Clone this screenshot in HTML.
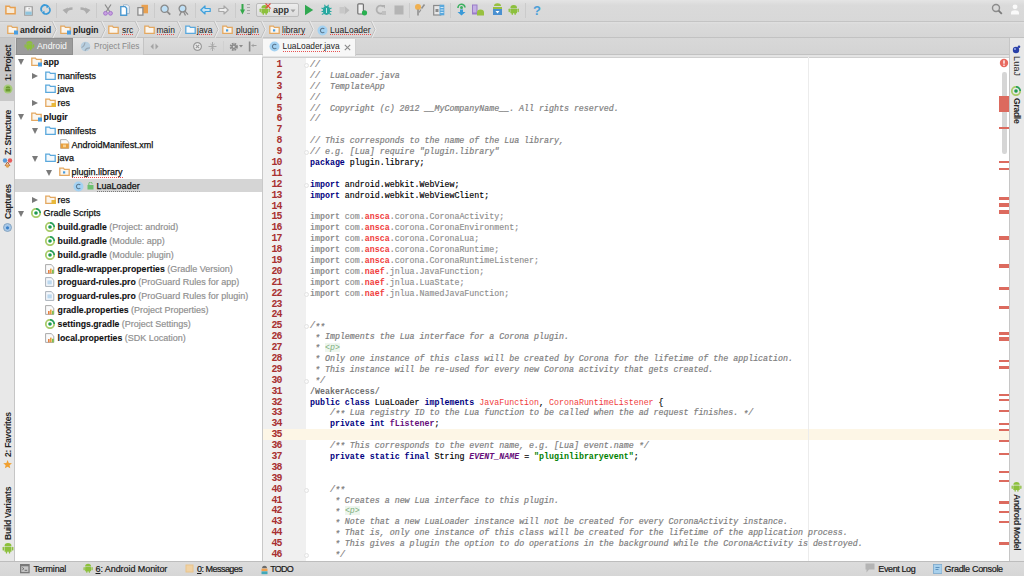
<!DOCTYPE html>
<html><head><meta charset="utf-8">
<style>
*{margin:0;padding:0;box-sizing:border-box}
html,body{width:1024px;height:576px;overflow:hidden;background:#e4e4e4;font-family:"Liberation Sans",sans-serif;font-size:9px;color:#1e1e1e}
.abs{position:absolute}
#toolbar{position:absolute;left:0;top:0;width:1024px;height:22px;background:linear-gradient(#e4e4e4,#dadada 25%,#d8d8d8);border-bottom:1px solid #c4c4c4}
#nav{position:absolute;left:0;top:22px;width:1024px;height:16px;background:linear-gradient(#e0e0e0,#dadada 15%,#d6d6d6);border-bottom:1px solid #c2c2c2}
.tsep{position:absolute;top:3px;width:1px;height:15px;background:#cbcbcb}
.ic{position:absolute}
.crumb{position:absolute;top:22px;height:17px;line-height:17px;font-size:8.5px;color:#222;white-space:nowrap}
.sq{background-image:linear-gradient(90deg,#e85050 50%,transparent 50%);background-size:2px 1px;background-repeat:repeat-x;background-position:0 11.8px}
.crumb b{font-weight:bold}
.squig{background-image:linear-gradient(90deg,#e05050 50%,transparent 50%);background-size:2px 1px;background-repeat:repeat-x;background-position:0 13px}
#lstripe{position:absolute;left:0;top:38px;width:15px;height:523px;background:#e8e8e8;border-right:1px solid #c6c6c6}
#rstripe{position:absolute;left:1009px;top:38px;width:15px;height:523px;background:#e8e8e8;border-left:1px solid #c6c6c6}
.vt{position:absolute;white-space:nowrap;font-size:9px;color:#222;transform-origin:0 0}
#proj{position:absolute;left:15px;top:38px;width:247px;height:523px;background:#fff}
#phead{position:absolute;left:0;top:0;width:247px;height:17px;background:linear-gradient(#dcdcdc,#d4d4d4);border-bottom:1px solid #c4c4c4}
.tree{position:absolute;left:0;height:14px;line-height:14px;white-space:nowrap;font-size:9px;color:#111;-webkit-text-stroke:0.25px #111}
.tree.b{font-weight:bold;font-size:8.7px;-webkit-text-stroke:0.1px #111}
.tree.und{background-image:linear-gradient(90deg,#7a7a7a 50%,transparent 50%);background-size:2px 1px;background-repeat:repeat-x;background-position:0 12px}
.tree.sqr{background-image:linear-gradient(90deg,#e85050 50%,transparent 50%);background-size:2px 1px;background-repeat:repeat-x;background-position:0 12px}
.tree .d{color:#8c8c8c;font-weight:normal;font-size:9px;-webkit-text-stroke:0.2px #9a9a9a}
.arr{position:absolute;width:0;height:0}
.adown{border-left:3px solid transparent;border-right:3px solid transparent;border-top:6px solid #7a7a7a}
.aright{border-top:3px solid transparent;border-bottom:3px solid transparent;border-left:6px solid #7a7a7a}
#etabs{position:absolute;left:262px;top:38px;width:747px;height:17px;background:linear-gradient(#d8d8d8,#d4d4d4);border-bottom:1px solid #c2c2c2}
#editor{position:absolute;left:262px;top:57px;width:747px;height:504px;background:#fff;overflow:hidden}
#gutter{position:absolute;left:0;top:0;width:44px;height:504px;background:#f0f0f0;border-left:1px solid #c8c8c8}
.num{position:absolute;left:0;width:19.4px;text-align:right;height:10.9px;line-height:10.9px;font-family:"Liberation Mono",monospace;font-size:9.9px;letter-spacing:-1px;font-weight:bold;color:#a83030;transform:translateY(-0.3px) scaleY(1.1)}
.ln{position:absolute;left:48px;height:10.9px;line-height:10.9px;white-space:pre;font-family:"Liberation Mono",monospace;font-size:8.30px;color:#000}
.ast{position:relative;top:1.3px}
.c{color:#808080;font-style:italic;-webkit-text-stroke:0.2px #808080}
.k{color:#000080;font-weight:bold}
.t{color:#000;-webkit-text-stroke:0.15px #000}
.g{color:#8e8e8e;-webkit-text-stroke:0.15px #8e8e8e}
.gk{color:#8e8e8e;font-weight:bold}
.r{color:#f03c3c;font-weight:bold}
.rn{color:#f03c3c}
.s{color:#008000;font-weight:bold}
.f{color:#660e7a;font-weight:bold}
.ci{color:#660e7a;font-weight:bold;font-style:italic}
.a{color:#707070;font-weight:bold}
.tag{color:#80b080;font-style:italic;background:#eef6ee}
.fold{position:absolute;left:41.5px;width:5px;height:5px;border:1px solid #e2e2e2;background:#fafafa;border-radius:2.5px}
.mk{position:absolute;left:737px;width:10px;background:#dc6a5e}
#status{position:absolute;left:0;top:561px;width:1024px;height:15px;background:linear-gradient(#dcdcdc,#d6d6d6);border-top:1px solid #bdbdbd}
.st{position:absolute;top:562px;height:15px;line-height:15px;font-size:9px;color:#1a1a1a;white-space:nowrap;-webkit-text-stroke:0.2px #1a1a1a}
.st u{text-decoration:underline;text-decoration-thickness:0.8px;text-underline-offset:1px}
</style></head><body>

<div id="toolbar">
  <div class="tsep" style="left:56px"></div>
  <div class="tsep" style="left:96px"></div>
  <div class="tsep" style="left:154px"></div>
  <div class="tsep" style="left:195px"></div>
  <div class="tsep" style="left:235px"></div>
  <div class="tsep" style="left:409px"></div>
  <div class="tsep" style="left:450px"></div>
  <div class="tsep" style="left:525px"></div>
<svg class="ic" style="left:5px;top:5px" width="11" height="10" viewBox="0 0 11 10"><path d="M0.9 1.3h3.5l1 1.2h4.7v6.3H0.9z" fill="#f6ead8" stroke="#e8a050" stroke-width="1.5"/></svg>
<svg class="ic" style="left:23.5px;top:5.5px" width="9" height="10" viewBox="0 0 9 10"><path d="M0.7 0.7h7.6v8.6H0.7z" fill="#e4e4e4" stroke="#9a9a9a" stroke-width="1.1"/><rect x="2.5" y="1.2" width="4" height="2.8" fill="#fafafa"/><rect x="4.6" y="1.8" width="1" height="1.6" fill="#9a9a9a"/><rect x="1.3" y="5.6" width="6.4" height="3.2" fill="#90c4dc"/></svg>
<svg class="ic" style="left:40px;top:4px" width="11" height="11" viewBox="0 0 11 11"><path d="M2 7.5A3.8 3.8 0 0 1 8 2.4" fill="none" stroke="#3a9ad8" stroke-width="1.8"/><path d="M9 3.5A3.8 3.8 0 0 1 3 8.6" fill="none" stroke="#3a9ad8" stroke-width="1.8"/><path d="M6.5 0.5l3 2.2-3 1.6z" fill="#3a9ad8"/><path d="M4.5 10.5l-3-2.2 3-1.6z" fill="#3a9ad8"/></svg>
<svg class="ic" style="left:62px;top:5px" width="11" height="10" viewBox="0 0 11 10"><path d="M3.5 7.5C5 4.5 7.5 3.5 10.5 3.5" fill="none" stroke="#acacac" stroke-width="2.4"/><path d="M0.5 5l5.5-2.5-1 6.5z" fill="#acacac"/></svg>
<svg class="ic" style="left:80px;top:5px" width="11" height="10" viewBox="0 0 11 10"><path d="M7.5 7.5C6 4.5 3.5 3.5 0.5 3.5" fill="none" stroke="#acacac" stroke-width="2.4"/><path d="M10.5 5L5 2.5l1 6.5z" fill="#acacac"/></svg>
<svg class="ic" style="left:103px;top:4px" width="10" height="12" viewBox="0 0 10 12"><path d="M2 0.5l5 7.5M8 0.5l-5 7.5" stroke="#8a8a8a" stroke-width="1.2"/><circle cx="2.5" cy="9.3" r="1.9" fill="#c8a0e0" stroke="#a070c8" stroke-width="0.9"/><circle cx="7.5" cy="9.3" r="1.9" fill="#c8a0e0" stroke="#a070c8" stroke-width="0.9"/></svg>
<svg class="ic" style="left:120px;top:4px" width="10" height="12" viewBox="0 0 10 12"><path d="M3.5 0.8h4l1.8 1.8v7h-5.8z" fill="#eef4fa" stroke="#9ab0c4" stroke-width="0.9"/><path d="M0.8 2.6h4.2l1.6 1.6v7H0.8z" fill="#ffffff" stroke="#4a98d0" stroke-width="1.4"/></svg>
<svg class="ic" style="left:137px;top:4px" width="12" height="12" viewBox="0 0 12 12"><rect x="4.5" y="0.8" width="6.5" height="8.5" fill="#e8a050"/><path d="M0.9 3.6h5v7.6h-5z" fill="#f2f2f2" stroke="#8c8c8c" stroke-width="1.3"/></svg>
<svg class="ic" style="left:160px;top:4px" width="11" height="12" viewBox="0 0 11 12"><circle cx="4.6" cy="4.8" r="3.6" fill="#bfe0f6" stroke="#8a8a8a" stroke-width="1.3"/><path d="M7.2 7.5l3 3.2" stroke="#8a8a8a" stroke-width="1.8"/></svg>
<svg class="ic" style="left:177px;top:4px" width="12" height="12" viewBox="0 0 12 12"><circle cx="5.5" cy="4.6" r="3.4" fill="#bfe0f6" stroke="#8a8a8a" stroke-width="1.3"/><path d="M2.5 11.5l2-4M8.5 11.5l-2-4M8 7.2l3 3.5" stroke="#8a8a8a" stroke-width="1.3"/></svg>
<svg class="ic" style="left:200px;top:5px" width="11" height="10" viewBox="0 0 11 10"><path d="M0.8 5L5 1v2.5h5.2v3H5V9z" fill="#c6e4f6" stroke="#3ea0dc" stroke-width="1.2" stroke-linejoin="round"/></svg>
<svg class="ic" style="left:218px;top:5px" width="11" height="10" viewBox="0 0 11 10"><path d="M10.2 5L6 1v2.5H0.8v3H6V9z" fill="#eeeeee" stroke="#a8a8a8" stroke-width="1.2" stroke-linejoin="round"/></svg>
<svg class="ic" style="left:240px;top:3px" width="11" height="13" viewBox="0 0 11 13"><path d="M2.5 1v6" stroke="#34a84a" stroke-width="2"/><path d="M0 6.5h5l-2.5 5z" fill="#34a84a"/><path d="M7 1.5h3M7 4.5h3M7 7.5h3M7 10.5h3" stroke="#a8a8a8" stroke-width="1.2"/></svg>
<div class="abs" style="left:256px;top:3px;width:43px;height:14px;border:1px solid #bcbcbc;border-radius:2px;background:linear-gradient(#ececec,#dcdcdc)"></div>
<svg class="ic" style="left:259px;top:4px" width="12" height="12" viewBox="0 0 12 12"><g transform="scale(0.95)" fill="#8cc03c"><path d="M2.5 4.2a3.5 3.2 0 0 1 7 0z"/><rect x="2.5" y="4.8" width="7" height="5" rx="0.6"/><rect x="0.6" y="4.8" width="1.4" height="3.8" rx="0.7"/><rect x="10" y="4.8" width="1.4" height="3.8" rx="0.7"/><rect x="3.8" y="9" width="1.4" height="2.6" rx="0.7"/><rect x="6.8" y="9" width="1.4" height="2.6" rx="0.7"/></g></svg>
<svg class="ic" style="left:265px;top:3px" width="6" height="6" viewBox="0 0 6 6"><path d="M0.5 0.5l5 5M5.5 0.5l-5 5" stroke="#e05040" stroke-width="1.1"/></svg>
<div class="abs" style="left:273px;top:3px;height:14px;line-height:15px;font-weight:bold;font-size:9px;color:#333">app</div>
<svg class="ic" style="left:290px;top:9px" width="6" height="4" viewBox="0 0 6 4"><path d="M0.5 0.5h5l-2.5 3z" fill="#a0a0a0"/></svg>
<svg class="ic" style="left:304px;top:4px" width="10" height="12" viewBox="0 0 10 12"><path d="M1 0.8l8.2 5.2L1 11.2z" fill="#30a850"/></svg>
<svg class="ic" style="left:321px;top:4px" width="11" height="12" viewBox="0 0 11 12"><ellipse cx="5.5" cy="6.5" rx="3.6" ry="4.4" fill="#28a8a0"/><path d="M0.5 4l2 1M10.5 4l-2 1M0.5 7.5h2M10.5 7.5h-2M0.8 10.5l2-1M10.2 10.5l-2-1M3.5 0.8l1 2M7.5 0.8l-1 2" stroke="#28a8a0" stroke-width="1.1"/><path d="M5.5 4v5" stroke="#bfeae6" stroke-width="1"/></svg>
<svg class="ic" style="left:339px;top:5px" width="11" height="11" viewBox="0 0 11 11"><path d="M0.5 2h4.5v6.5H0.5z" fill="#c8c8c8"/><path d="M5.5 1l5 4.2-5 4.2z" fill="#bcbcbc"/></svg>
<svg class="ic" style="left:357px;top:3px" width="11" height="13" viewBox="0 0 11 13"><rect x="0.8" y="0.8" width="5.6" height="10.2" rx="1" fill="#f0f0f0" stroke="#707070" stroke-width="1.2"/><circle cx="7.5" cy="9.8" r="2.6" fill="#28b050"/></svg>
<svg class="ic" style="left:375px;top:4px" width="12" height="12" viewBox="0 0 12 12"><path d="M8.2 2.6A4 4 0 1 0 8.8 8" fill="none" stroke="#b0b0b0" stroke-width="1.8"/><path d="M6.5 1h3.5v3.5z" fill="#b0b0b0"/><rect x="7" y="7" width="4" height="4" fill="#c0c0c0"/></svg>
<svg class="ic" style="left:394px;top:5px" width="10" height="10" viewBox="0 0 10 10"><rect x="0.5" y="0.5" width="9" height="9" fill="#b4b4b4"/></svg>
<svg class="ic" style="left:414px;top:3px" width="12" height="13" viewBox="0 0 12 13"><circle cx="4" cy="4" r="3" fill="#f0b050"/><path d="M4 6.5v6" stroke="#909090" stroke-width="1.6"/><path d="M10.5 1.5l-3 4" stroke="#909090" stroke-width="1.6"/><path d="M7 6.5l-2 3" stroke="#909090" stroke-width="1.2"/></svg>
<svg class="ic" style="left:433px;top:4px" width="12" height="12" viewBox="0 0 12 12"><rect x="0.7" y="1.5" width="7" height="9.5" fill="#e6e6e6" stroke="#8a8a8a" stroke-width="1.2"/><rect x="6.5" y="0.7" width="4.8" height="10.6" fill="#5aa8dc"/><path d="M7.5 3.5h3M7.5 6h3M7.5 8.5h3" stroke="#eaf4fb" stroke-width="0.8"/><rect x="2.5" y="5" width="3" height="3" fill="#8a8a8a"/></svg>
<svg class="ic" style="left:456px;top:3px" width="11" height="13" viewBox="0 0 11 13"><path d="M2 5A3.5 3.5 0 0 1 9 4.5" fill="none" stroke="#3cb060" stroke-width="1.6"/><circle cx="5.5" cy="4.6" r="1.5" fill="#3cb060"/><path d="M4 6.5h3v2.5h2.5L5.5 12.5 1.5 9H4z" fill="#3a9ad8"/></svg>
<svg class="ic" style="left:471px;top:4px" width="14" height="12" viewBox="0 0 14 12"><rect x="1" y="0.5" width="5.5" height="10" fill="#9a7cc8"/><rect x="2" y="1.5" width="3.5" height="7" fill="#c4b0e4"/><path d="M6 8.5a3.5 3 0 0 1 7 0v3H6z" fill="#98c040"/></svg>
<svg class="ic" style="left:492px;top:3px" width="11" height="13" viewBox="0 0 11 13"><path d="M2 3a3.5 2.8 0 0 1 7 0z" fill="#98c040"/><rect x="1" y="4" width="9" height="8" fill="#4a90d0"/><rect x="1" y="4" width="9" height="2" fill="#98c040"/><path d="M3.5 8h4l-2 2.5z" fill="#fff"/></svg>
<svg class="ic" style="left:508px;top:4px" width="12" height="12" viewBox="0 0 12 12"><g transform="scale(0.95)" fill="#8cc03c"><path d="M2.5 4.2a3.5 3.2 0 0 1 7 0z"/><rect x="2.5" y="4.8" width="7" height="5" rx="0.6"/><rect x="0.6" y="4.8" width="1.4" height="3.8" rx="0.7"/><rect x="10" y="4.8" width="1.4" height="3.8" rx="0.7"/><rect x="3.8" y="9" width="1.4" height="2.6" rx="0.7"/><rect x="6.8" y="9" width="1.4" height="2.6" rx="0.7"/></g></svg>
<div class="abs" style="left:533px;top:2px;height:17px;line-height:17px;font-weight:bold;font-size:13px;color:#4aa0d8">?</div>
<svg class="ic" style="left:991px;top:3px" width="12" height="12" viewBox="0 0 12 12"><circle cx="5" cy="5" r="3.5" fill="none" stroke="#8c8c8c" stroke-width="1.4"/><path d="M7.6 7.6l3.2 3.2" stroke="#7a7a7a" stroke-width="1.8"/></svg>
<svg class="ic" style="left:1010px;top:3px" width="10" height="12" viewBox="0 0 10 12"><circle cx="5" cy="3.8" r="2.4" fill="#fafafa"/><path d="M1 11.5v-1.8C1 8 3 7.3 5 7.3S9 8 9 9.7v1.8z" fill="#fafafa"/></svg>
</div>

<div id="nav"></div>
<svg class="ic" style="left:7px;top:25px" width="11" height="10" viewBox="0 0 11 10"><path d="M0.8 1.2h3.6l1 1.2h4.8v5.9H0.8z" fill="#fbf6ee" stroke="#e4a860" stroke-width="1.3"/><rect x="7" y="5.5" width="4" height="4" fill="#4a9ee0"/></svg>
<div class="crumb" style="left:20px;font-weight:bold">android</div>
<svg class="ic" style="left:50.5px;top:21px" width="7" height="17" viewBox="0 0 7 17"><path d="M1 0L5 8.5 1 17" fill="none" stroke="#bdbdbd" stroke-width="1"/><path d="M2 0L6 8.5 2 17" fill="none" stroke="#ececec" stroke-width="0.9"/></svg>
<svg class="ic" style="left:60px;top:25px" width="11" height="10" viewBox="0 0 11 10"><path d="M0.8 1.2h3.6l1 1.2h4.8v5.9H0.8z" fill="#fbf6ee" stroke="#e4a860" stroke-width="1.3"/><rect x="7" y="5.5" width="4" height="4" fill="#4a9ee0"/></svg>
<div class="crumb" style="left:73px;font-weight:bold">plugin</div>
<svg class="ic" style="left:99.5px;top:21px" width="7" height="17" viewBox="0 0 7 17"><path d="M1 0L5 8.5 1 17" fill="none" stroke="#bdbdbd" stroke-width="1"/><path d="M2 0L6 8.5 2 17" fill="none" stroke="#ececec" stroke-width="0.9"/></svg>
<svg class="ic" style="left:108px;top:25px" width="11" height="10" viewBox="0 0 11 10"><path d="M0.8 1.2h3.6l1 1.2h4.8v5.9H0.8z" fill="#fbf6ee" stroke="#e4a860" stroke-width="1.3"/></svg>
<div class="crumb sq" style="left:122px;font-weight:normal">src</div>
<svg class="ic" style="left:133.5px;top:21px" width="7" height="17" viewBox="0 0 7 17"><path d="M1 0L5 8.5 1 17" fill="none" stroke="#bdbdbd" stroke-width="1"/><path d="M2 0L6 8.5 2 17" fill="none" stroke="#ececec" stroke-width="0.9"/></svg>
<svg class="ic" style="left:143.5px;top:25px" width="11" height="10" viewBox="0 0 11 10"><path d="M0.8 1.2h3.6l1 1.2h4.8v5.9H0.8z" fill="#fbf6ee" stroke="#e4a860" stroke-width="1.3"/></svg>
<div class="crumb sq" style="left:156.5px;font-weight:normal">main</div>
<svg class="ic" style="left:175.5px;top:21px" width="7" height="17" viewBox="0 0 7 17"><path d="M1 0L5 8.5 1 17" fill="none" stroke="#bdbdbd" stroke-width="1"/><path d="M2 0L6 8.5 2 17" fill="none" stroke="#ececec" stroke-width="0.9"/></svg>
<svg class="ic" style="left:184.5px;top:25px" width="11" height="10" viewBox="0 0 11 10"><path d="M0.8 1.2h3.6l1 1.2h4.8v5.9H0.8z" fill="#f4f9fd" stroke="#5aa8dc" stroke-width="1.3"/></svg>
<div class="crumb sq" style="left:197px;font-weight:normal">java</div>
<svg class="ic" style="left:212.5px;top:21px" width="7" height="17" viewBox="0 0 7 17"><path d="M1 0L5 8.5 1 17" fill="none" stroke="#bdbdbd" stroke-width="1"/><path d="M2 0L6 8.5 2 17" fill="none" stroke="#ececec" stroke-width="0.9"/></svg>
<svg class="ic" style="left:222px;top:25px" width="11" height="10" viewBox="0 0 11 10"><path d="M0.8 1.2h3.6l1 1.2h4.8v5.9H0.8z" fill="#fbf6ee" stroke="#e4a860" stroke-width="1.3"/><rect x="4" y="4.3" width="2.2" height="2.2" fill="#4a9ee0"/></svg>
<div class="crumb sq" style="left:236px;font-weight:normal">plugin</div>
<svg class="ic" style="left:260.0px;top:21px" width="7" height="17" viewBox="0 0 7 17"><path d="M1 0L5 8.5 1 17" fill="none" stroke="#bdbdbd" stroke-width="1"/><path d="M2 0L6 8.5 2 17" fill="none" stroke="#ececec" stroke-width="0.9"/></svg>
<svg class="ic" style="left:269px;top:25px" width="11" height="10" viewBox="0 0 11 10"><path d="M0.8 1.2h3.6l1 1.2h4.8v5.9H0.8z" fill="#fbf6ee" stroke="#e4a860" stroke-width="1.3"/><rect x="4" y="4.3" width="2.2" height="2.2" fill="#4a9ee0"/></svg>
<div class="crumb sq" style="left:282px;font-weight:normal">library</div>
<svg class="ic" style="left:307.5px;top:21px" width="7" height="17" viewBox="0 0 7 17"><path d="M1 0L5 8.5 1 17" fill="none" stroke="#bdbdbd" stroke-width="1"/><path d="M2 0L6 8.5 2 17" fill="none" stroke="#ececec" stroke-width="0.9"/></svg>
<svg class="ic" style="left:317px;top:25px" width="11" height="11" viewBox="0 0 11 11"><circle cx="5.5" cy="5.5" r="5" fill="#a4d2f2"/><path d="M7.3 4A2.2 2.3 0 1 0 7.3 7" fill="none" stroke="#5a7890" stroke-width="1.1"/></svg>
<div class="crumb sq" style="left:330px;font-weight:normal">LuaLoader</div>
<svg class="ic" style="left:369.5px;top:21px" width="7" height="17" viewBox="0 0 7 17"><path d="M1 0L5 8.5 1 17" fill="none" stroke="#bdbdbd" stroke-width="1"/><path d="M2 0L6 8.5 2 17" fill="none" stroke="#ececec" stroke-width="0.9"/></svg>

<div id="lstripe"></div>
<div id="rstripe"></div>
<div class="abs" style="left:0;top:38px;width:14px;height:63px;background:#c8c8c8"></div>
<div class="vt" style="left:0.5px;top:81px;height:14px;line-height:14px;font-size:8.6px;letter-spacing:-0.3px;font-weight:bold;color:#262626;transform:rotate(-90deg)">1: Project</div>
<svg class="ic" style="left:2.5px;top:84px" width="10" height="10" viewBox="0 0 10 10"><circle cx="5" cy="5" r="4.5" fill="#a6cc78"/><path d="M2.6 4.2a2.4 2 0 0 1 4.8 0zM2.6 4.8h4.8v2.8H2.6z" fill="#6a9a30"/></svg>
<div class="vt" style="left:0.5px;top:154.5px;height:14px;line-height:14px;font-size:8.6px;letter-spacing:-0.3px;font-weight:bold;color:#262626;transform:rotate(-90deg)">Z: Structure</div>
<svg class="ic" style="left:2px;top:157px" width="11" height="11" viewBox="0 0 11 11"><path d="M5.5 5L3 9M5.5 5L8 9" stroke="#b06030" stroke-width="1"/><circle cx="3" cy="3.5" r="2.2" fill="#5a9ad8"/><circle cx="8" cy="3.5" r="2.2" fill="#e85a5a"/><circle cx="5.5" cy="9" r="1.8" fill="#e0a050"/></svg>
<div class="vt" style="left:0.5px;top:219px;height:14px;line-height:14px;font-size:8.6px;letter-spacing:-0.3px;font-weight:bold;color:#262626;transform:rotate(-90deg)">Captures</div>
<svg class="ic" style="left:3px;top:223px" width="9" height="9" viewBox="0 0 9 9"><circle cx="4.5" cy="4.5" r="4" fill="#a8c8e8" stroke="#7a9ab8" stroke-width="0.8"/><circle cx="4.5" cy="4.8" r="1.6" fill="#3a80c8"/></svg>
<div class="vt" style="left:0.5px;top:456.5px;height:14px;line-height:14px;font-size:8.6px;letter-spacing:-0.3px;font-weight:bold;color:#262626;transform:rotate(-90deg)">2: Favorites</div>
<svg class="ic" style="left:2.7px;top:459.9px" width="9.2" height="9.2" viewBox="0 0 9.2 9.2"><polygon points="4.60,0.00 5.82,2.93 8.97,3.18 6.57,5.24 7.30,8.32 4.60,6.67 1.90,8.32 2.63,5.24 0.23,3.18 3.38,2.93" fill="#f0a030"/></svg>
<div class="vt" style="left:0.5px;top:539.5px;height:14px;line-height:14px;font-size:8.6px;letter-spacing:-0.3px;font-weight:bold;color:#262626;transform:rotate(-90deg)">Build Variants</div>
<svg class="ic" style="left:1.5px;top:542px" width="12" height="12" viewBox="0 0 12 12"><g transform="scale(1.0)" fill="#8cc03c"><path d="M2.5 4.2a3.5 3.2 0 0 1 7 0z"/><rect x="2.5" y="4.8" width="7" height="5" rx="0.6"/><rect x="0.6" y="4.8" width="1.4" height="3.8" rx="0.7"/><rect x="10" y="4.8" width="1.4" height="3.8" rx="0.7"/><rect x="3.8" y="9" width="1.4" height="2.6" rx="0.7"/><rect x="6.8" y="9" width="1.4" height="2.6" rx="0.7"/></g></svg>
<svg class="ic" style="left:1012px;top:44.5px" width="9" height="9" viewBox="0 0 9 9"><circle cx="4" cy="5" r="3.2" fill="#2a40a8"/><circle cx="7" cy="1.8" r="1.3" fill="#2a40a8"/><circle cx="3" cy="4" r="0.9" fill="#a8b8f0"/></svg>
<div class="vt" style="left:1024.3px;top:56px;height:14px;line-height:14px;font-size:9px;letter-spacing:0.2px;font-weight:normal;color:#222;transform:rotate(90deg)">LuaJ</div>
<svg class="ic" style="left:1011px;top:85.5px" width="10" height="10" viewBox="0 0 10 10"><path d="M5 0.8a4.2 4.2 0 0 1 4.2 4.2" fill="none" stroke="#2ca05a" stroke-width="1.8"/><path d="M9.2 5a4.2 4.2 0 1 1 -4.2 -4.2" fill="none" stroke="#a8cc6a" stroke-width="1.8"/><circle cx="5" cy="5" r="1.8" fill="#1e9a50"/></svg>
<div class="vt" style="left:1024.3px;top:98px;height:14px;line-height:14px;font-size:8.6px;letter-spacing:-0.3px;font-weight:bold;color:#262626;transform:rotate(90deg)">Gradle</div>
<svg class="ic" style="left:1010.5px;top:481px" width="12" height="12" viewBox="0 0 12 12"><g transform="scale(0.92)" fill="#8cc03c"><path d="M2.5 4.2a3.5 3.2 0 0 1 7 0z"/><rect x="2.5" y="4.8" width="7" height="5" rx="0.6"/><rect x="0.6" y="4.8" width="1.4" height="3.8" rx="0.7"/><rect x="10" y="4.8" width="1.4" height="3.8" rx="0.7"/><rect x="3.8" y="9" width="1.4" height="2.6" rx="0.7"/><rect x="6.8" y="9" width="1.4" height="2.6" rx="0.7"/></g></svg>
<div class="vt" style="left:1024.3px;top:494px;height:14px;line-height:14px;font-size:8.6px;letter-spacing:-0.3px;font-weight:bold;color:#262626;transform:rotate(90deg)">Android Model</div>

<div id="proj">
  <div id="phead"></div>
  <div class="abs" style="left:0;top:140.6px;width:247px;height:13.6px;background:#d5d5d5"></div>
  <div class="arr adown" style="left:3px;top:21.2px"></div>
<svg class="ic" style="left:16px;top:19px" width="11" height="10" viewBox="0 0 11 10"><path d="M0.8 1.2h3.6l1 1.2h4.8v5.9H0.8z" fill="#fbf6ee" stroke="#e4a860" stroke-width="1.3"/><rect x="7" y="5.5" width="4" height="4" fill="#4a9ee0"/></svg>
<div class="tree b" style="left:28.6px;top:16.8px">app</div>
<div class="arr aright" style="left:17px;top:34.5px"></div>
<svg class="ic" style="left:30px;top:33px" width="11" height="10" viewBox="0 0 11 10"><path d="M0.8 1.2h3.6l1 1.2h4.8v5.9H0.8z" fill="#f4f9fd" stroke="#5aa8dc" stroke-width="1.3"/></svg>
<div class="tree" style="left:42.6px;top:30.5px">manifests</div>
<svg class="ic" style="left:30px;top:46px" width="11" height="10" viewBox="0 0 11 10"><path d="M0.8 1.2h3.6l1 1.2h4.8v5.9H0.8z" fill="#f4f9fd" stroke="#5aa8dc" stroke-width="1.3"/></svg>
<div class="tree" style="left:42.6px;top:44.3px">java</div>
<div class="arr aright" style="left:17px;top:62.1px"></div>
<svg class="ic" style="left:30px;top:60px" width="11" height="10" viewBox="0 0 11 10"><path d="M0.8 1.2h3.6l1 1.2h4.8v5.9H0.8z" fill="#fbf6ee" stroke="#e4a860" stroke-width="1.3"/><rect x="6.5" y="5" width="4.5" height="4" fill="#e8b83a"/></svg>
<div class="tree" style="left:42.6px;top:58.1px">res</div>
<div class="arr adown" style="left:3px;top:76.4px"></div>
<svg class="ic" style="left:16px;top:74px" width="11" height="10" viewBox="0 0 11 10"><path d="M0.8 1.2h3.6l1 1.2h4.8v5.9H0.8z" fill="#fbf6ee" stroke="#e4a860" stroke-width="1.3"/><rect x="7" y="5.5" width="4" height="4" fill="#4a9ee0"/></svg>
<div class="tree b" style="left:28.6px;top:71.9px">plugir</div>
<div class="arr adown" style="left:17px;top:90.2px"></div>
<svg class="ic" style="left:30px;top:88px" width="11" height="10" viewBox="0 0 11 10"><path d="M0.8 1.2h3.6l1 1.2h4.8v5.9H0.8z" fill="#f4f9fd" stroke="#5aa8dc" stroke-width="1.3"/></svg>
<div class="tree" style="left:42.6px;top:85.7px">manifests</div>
<svg class="ic" style="left:45px;top:101px" width="10" height="10" viewBox="0 0 10 10"><path d="M0.6 0.6h5.6l2.6 2.6v6.2H0.6z" fill="#fafafa" stroke="#a8a8a8" stroke-width="0.9"/><rect x="0.6" y="4.5" width="8.2" height="5" fill="#e8a040"/><rect x="3" y="5.6" width="3" height="2.6" fill="#f6d090"/></svg>
<div class="tree" style="left:56.6px;top:99.5px">AndroidManifest.xml</div>
<div class="arr adown" style="left:17px;top:117.8px"></div>
<svg class="ic" style="left:30px;top:115px" width="11" height="10" viewBox="0 0 11 10"><path d="M0.8 1.2h3.6l1 1.2h4.8v5.9H0.8z" fill="#f4f9fd" stroke="#5aa8dc" stroke-width="1.3"/></svg>
<div class="tree" style="left:42.6px;top:113.3px">java</div>
<div class="arr adown" style="left:31px;top:131.6px"></div>
<svg class="ic" style="left:44px;top:129px" width="11" height="10" viewBox="0 0 11 10"><path d="M0.8 1.2h3.6l1 1.2h4.8v5.9H0.8z" fill="#fbf6ee" stroke="#e4a860" stroke-width="1.3"/><rect x="4" y="4.3" width="2.2" height="2.2" fill="#4a9ee0"/></svg>
<div class="tree sqr" style="left:56.6px;top:127.1px">plugin.library</div>
<svg class="ic" style="left:57.5px;top:142.5px" width="11" height="11" viewBox="0 0 11 11"><circle cx="5.5" cy="5.5" r="5" fill="#a4d2f2"/><path d="M7.3 4A2.2 2.3 0 1 0 7.3 7" fill="none" stroke="#5a7890" stroke-width="1.1"/></svg>
<svg class="ic" style="left:72px;top:144px" width="7" height="8" viewBox="0 0 7 8"><rect x="0.5" y="3" width="6" height="4.5" fill="#6cc070"/><path d="M1.8 3.2V1.8a1.7 1.7 0 0 1 3.4 0" fill="none" stroke="#6cc070" stroke-width="1"/></svg>
<div class="tree und" style="left:81.6px;top:140.9px">LuaLoader</div>
<div class="arr aright" style="left:17px;top:158.6px"></div>
<svg class="ic" style="left:30px;top:157px" width="11" height="10" viewBox="0 0 11 10"><path d="M0.8 1.2h3.6l1 1.2h4.8v5.9H0.8z" fill="#fbf6ee" stroke="#e4a860" stroke-width="1.3"/><rect x="6.5" y="5" width="4.5" height="4" fill="#e8b83a"/></svg>
<div class="tree" style="left:42.6px;top:154.6px">res</div>
<div class="arr adown" style="left:3px;top:172.9px"></div>
<svg class="ic" style="left:16px;top:170px" width="10" height="10" viewBox="0 0 10 10"><path d="M5 0.8a4.2 4.2 0 0 1 4.2 4.2" fill="none" stroke="#2ca05a" stroke-width="1.8"/><path d="M9.2 5a4.2 4.2 0 1 1 -4.2 -4.2" fill="none" stroke="#a8cc6a" stroke-width="1.8"/><circle cx="5" cy="5" r="1.8" fill="#1e9a50"/></svg>
<div class="tree" style="left:28.6px;top:168.4px">Gradle Scripts</div>
<svg class="ic" style="left:30px;top:184px" width="10" height="10" viewBox="0 0 10 10"><path d="M5 0.8a4.2 4.2 0 0 1 4.2 4.2" fill="none" stroke="#2ca05a" stroke-width="1.8"/><path d="M9.2 5a4.2 4.2 0 1 1 -4.2 -4.2" fill="none" stroke="#a8cc6a" stroke-width="1.8"/><circle cx="5" cy="5" r="1.8" fill="#1e9a50"/></svg>
<div class="tree b" style="left:42.6px;top:182.2px">build.gradle <span class="d">(Project: android)</span></div>
<svg class="ic" style="left:30px;top:198px" width="10" height="10" viewBox="0 0 10 10"><path d="M5 0.8a4.2 4.2 0 0 1 4.2 4.2" fill="none" stroke="#2ca05a" stroke-width="1.8"/><path d="M9.2 5a4.2 4.2 0 1 1 -4.2 -4.2" fill="none" stroke="#a8cc6a" stroke-width="1.8"/><circle cx="5" cy="5" r="1.8" fill="#1e9a50"/></svg>
<div class="tree b" style="left:42.6px;top:196.0px">build.gradle <span class="d">(Module: app)</span></div>
<svg class="ic" style="left:30px;top:212px" width="10" height="10" viewBox="0 0 10 10"><path d="M5 0.8a4.2 4.2 0 0 1 4.2 4.2" fill="none" stroke="#2ca05a" stroke-width="1.8"/><path d="M9.2 5a4.2 4.2 0 1 1 -4.2 -4.2" fill="none" stroke="#a8cc6a" stroke-width="1.8"/><circle cx="5" cy="5" r="1.8" fill="#1e9a50"/></svg>
<div class="tree b" style="left:42.6px;top:209.8px">build.gradle <span class="d">(Module: plugin)</span></div>
<svg class="ic" style="left:30px;top:226px" width="10" height="10" viewBox="0 0 10 10"><path d="M0.6 0.6h5.6l2.6 2.6v6.2H0.6z" fill="#fafafa" stroke="#a0a0a0" stroke-width="0.9"/><rect x="3" y="6" width="1.6" height="3.4" fill="#e88040"/><rect x="5" y="4.6" width="1.6" height="4.8" fill="#e8a040"/><rect x="7" y="5.8" width="1.8" height="3.6" fill="#80c050"/></svg>
<div class="tree b" style="left:42.6px;top:223.6px">gradle-wrapper.properties <span class="d">(Gradle Version)</span></div>
<svg class="ic" style="left:30px;top:239px" width="10" height="10" viewBox="0 0 10 10"><path d="M0.6 0.6h5.6l2.6 2.6v6.2H0.6z" fill="#f4f8fc" stroke="#a0a8b0" stroke-width="0.9"/><rect x="2.4" y="3.4" width="4.4" height="4" fill="#bcd8ee"/></svg>
<div class="tree b" style="left:42.6px;top:237.4px">proguard-rules.pro <span class="d">(ProGuard Rules for app)</span></div>
<svg class="ic" style="left:30px;top:253px" width="10" height="10" viewBox="0 0 10 10"><path d="M0.6 0.6h5.6l2.6 2.6v6.2H0.6z" fill="#f4f8fc" stroke="#a0a8b0" stroke-width="0.9"/><rect x="2.4" y="3.4" width="4.4" height="4" fill="#bcd8ee"/></svg>
<div class="tree b" style="left:42.6px;top:251.2px">proguard-rules.pro <span class="d">(ProGuard Rules for plugin)</span></div>
<svg class="ic" style="left:30px;top:267px" width="10" height="10" viewBox="0 0 10 10"><path d="M0.6 0.6h5.6l2.6 2.6v6.2H0.6z" fill="#fafafa" stroke="#a0a0a0" stroke-width="0.9"/><rect x="3" y="6" width="1.6" height="3.4" fill="#e88040"/><rect x="5" y="4.6" width="1.6" height="4.8" fill="#e8a040"/><rect x="7" y="5.8" width="1.8" height="3.6" fill="#80c050"/></svg>
<div class="tree b" style="left:42.6px;top:265.0px">gradle.properties <span class="d">(Project Properties)</span></div>
<svg class="ic" style="left:30px;top:281px" width="10" height="10" viewBox="0 0 10 10"><path d="M5 0.8a4.2 4.2 0 0 1 4.2 4.2" fill="none" stroke="#2ca05a" stroke-width="1.8"/><path d="M9.2 5a4.2 4.2 0 1 1 -4.2 -4.2" fill="none" stroke="#a8cc6a" stroke-width="1.8"/><circle cx="5" cy="5" r="1.8" fill="#1e9a50"/></svg>
<div class="tree b" style="left:42.6px;top:278.8px">settings.gradle <span class="d">(Project Settings)</span></div>
<svg class="ic" style="left:30px;top:295px" width="10" height="10" viewBox="0 0 10 10"><path d="M0.6 0.6h5.6l2.6 2.6v6.2H0.6z" fill="#fafafa" stroke="#a0a0a0" stroke-width="0.9"/><rect x="3" y="6" width="1.6" height="3.4" fill="#e88040"/><rect x="5" y="4.6" width="1.6" height="4.8" fill="#e8a040"/><rect x="7" y="5.8" width="1.8" height="3.6" fill="#80c050"/></svg>
<div class="tree b" style="left:42.6px;top:292.5px">local.properties <span class="d">(SDK Location)</span></div>
</div>

<div id="etabs"></div>
<div class="abs" style="left:262.5px;top:38.5px;width:93px;height:17px;background:#f7f7f7;border-right:1px solid #cfcfcf"></div>
<svg class="ic" style="left:268.5px;top:41px" width="11" height="11" viewBox="0 0 11 11"><circle cx="5.5" cy="5.5" r="5" fill="#a4d2f2"/><path d="M7.3 4A2.2 2.3 0 1 0 7.3 7" fill="none" stroke="#5a7890" stroke-width="1.1"/></svg>
<div class="abs sq" style="background-position:0 12.5px;left:282.5px;top:38px;height:17px;line-height:17px;font-size:8.35px;color:#222;white-space:nowrap">LuaLoader.java</div>
<svg class="ic" style="left:344px;top:43.5px" width="7" height="7" viewBox="0 0 7 7"><path d="M0.8 0.8l5.4 5.4M6.2 0.8L0.8 6.2" stroke="#8a8a8a" stroke-width="1.1"/></svg>

<div id="editor">
  <div id="gutter"></div>
  <div class="abs" style="left:0;top:0;width:747px;height:1px;background:#cfcfcf"></div>
  <div class="abs" style="left:1px;top:371.6px;width:746px;height:11.1px;background:#fdf6e6"></div>
  <div class="abs" style="left:546px;top:0;width:1px;height:504px;background:#ececec"></div>
  <div id="nums" class="abs" style="left:0;top:-57px"><div class="num" style="top:60.00px">1</div>
<div class="num" style="top:70.89px">2</div>
<div class="num" style="top:81.78px">3</div>
<div class="num" style="top:92.67px">4</div>
<div class="num" style="top:103.56px">5</div>
<div class="num" style="top:114.44px">6</div>
<div class="num" style="top:125.33px">7</div>
<div class="num" style="top:136.22px">8</div>
<div class="num" style="top:147.11px">9</div>
<div class="num" style="top:158.00px">10</div>
<div class="num" style="top:168.89px">11</div>
<div class="num" style="top:179.78px">12</div>
<div class="num" style="top:190.67px">13</div>
<div class="num" style="top:201.56px">14</div>
<div class="num" style="top:212.45px">15</div>
<div class="num" style="top:223.33px">16</div>
<div class="num" style="top:234.22px">17</div>
<div class="num" style="top:245.11px">18</div>
<div class="num" style="top:256.00px">19</div>
<div class="num" style="top:266.89px">20</div>
<div class="num" style="top:277.78px">21</div>
<div class="num" style="top:288.67px">22</div>
<div class="num" style="top:299.56px">23</div>
<div class="num" style="top:310.45px">24</div>
<div class="num" style="top:321.34px">25</div>
<div class="num" style="top:332.22px">26</div>
<div class="num" style="top:343.11px">27</div>
<div class="num" style="top:354.00px">28</div>
<div class="num" style="top:364.89px">29</div>
<div class="num" style="top:375.78px">30</div>
<div class="num" style="top:386.67px">31</div>
<div class="num" style="top:397.56px">32</div>
<div class="num" style="top:408.45px">33</div>
<div class="num" style="top:419.34px">34</div>
<div class="num" style="top:430.23px">35</div>
<div class="num" style="top:441.11px">36</div>
<div class="num" style="top:452.00px">37</div>
<div class="num" style="top:462.89px">38</div>
<div class="num" style="top:473.78px">39</div>
<div class="num" style="top:484.67px">40</div>
<div class="num" style="top:495.56px">41</div>
<div class="num" style="top:506.45px">42</div>
<div class="num" style="top:517.34px">43</div>
<div class="num" style="top:528.23px">44</div>
<div class="num" style="top:539.12px">45</div>
<div class="num" style="top:550.00px">46</div></div>
  <div class="abs" style="left:0;top:-57px"><div class="fold" style="top:63.00px"></div><div class="fold" style="top:150.11px"></div><div class="fold" style="top:182.78px"></div><div class="fold" style="top:291.67px"></div><div class="fold" style="top:324.34px"></div><div class="fold" style="top:378.78px"></div><div class="fold" style="top:487.67px"></div><div class="fold" style="top:553.00px"></div></div>
  <div class="abs" style="left:0;top:-57px"><div class="ln" style="top:60.00px"><span class="c">//</span></div>
<div class="ln" style="top:70.89px"><span class="c">//  LuaLoader.java</span></div>
<div class="ln" style="top:81.78px"><span class="c">//  TemplateApp</span></div>
<div class="ln" style="top:92.67px"><span class="c">//</span></div>
<div class="ln" style="top:103.56px"><span class="c">//  Copyright (c) 2012 __MyCompanyName__. All rights reserved.</span></div>
<div class="ln" style="top:114.44px"><span class="c">//</span></div>
<div class="ln" style="top:125.33px"></div>
<div class="ln" style="top:136.22px"><span class="c">// This corresponds to the name of the Lua library,</span></div>
<div class="ln" style="top:147.11px"><span class="c">// e.g. [Lua] require "plugin.library"</span></div>
<div class="ln" style="top:158.00px"><span class="k">package</span><span class="t"> plugin.library;</span></div>
<div class="ln" style="top:168.89px"></div>
<div class="ln" style="top:179.78px"><span class="k">import</span><span class="t"> android.webkit.WebView;</span></div>
<div class="ln" style="top:190.67px"><span class="k">import</span><span class="t"> android.webkit.WebViewClient;</span></div>
<div class="ln" style="top:201.56px"></div>
<div class="ln" style="top:212.45px"><span class="gk">import</span><span class="g"> com.</span><span class="r">ansca</span><span class="g">.corona.CoronaActivity;</span></div>
<div class="ln" style="top:223.33px"><span class="gk">import</span><span class="g"> com.</span><span class="r">ansca</span><span class="g">.corona.CoronaEnvironment;</span></div>
<div class="ln" style="top:234.22px"><span class="gk">import</span><span class="g"> com.</span><span class="r">ansca</span><span class="g">.corona.CoronaLua;</span></div>
<div class="ln" style="top:245.11px"><span class="gk">import</span><span class="g"> com.</span><span class="r">ansca</span><span class="g">.corona.CoronaRuntime;</span></div>
<div class="ln" style="top:256.00px"><span class="gk">import</span><span class="g"> com.</span><span class="r">ansca</span><span class="g">.corona.CoronaRuntimeListener;</span></div>
<div class="ln" style="top:266.89px"><span class="gk">import</span><span class="g"> com.</span><span class="r">naef</span><span class="g">.jnlua.JavaFunction;</span></div>
<div class="ln" style="top:277.78px"><span class="gk">import</span><span class="g"> com.</span><span class="r">naef</span><span class="g">.jnlua.LuaState;</span></div>
<div class="ln" style="top:288.67px"><span class="gk">import</span><span class="g"> com.</span><span class="r">naef</span><span class="g">.jnlua.NamedJavaFunction;</span></div>
<div class="ln" style="top:299.56px"></div>
<div class="ln" style="top:310.45px"></div>
<div class="ln" style="top:321.34px"><span class="c">/<span class="ast">*</span><span class="ast">*</span></span></div>
<div class="ln" style="top:332.22px"><span class="c"> <span class="ast">*</span> Implements the Lua interface for a Corona plugin.</span></div>
<div class="ln" style="top:343.11px"><span class="c"> <span class="ast">*</span> </span><span class="tag">&lt;p&gt;</span></div>
<div class="ln" style="top:354.00px"><span class="c"> <span class="ast">*</span> Only one instance of this class will be created by Corona for the lifetime of the application.</span></div>
<div class="ln" style="top:364.89px"><span class="c"> <span class="ast">*</span> This instance will be re-used for every new Corona activity that gets created.</span></div>
<div class="ln" style="top:375.78px"><span class="c"> <span class="ast">*</span>/</span></div>
<div class="ln" style="top:386.67px"><span class="a">/WeakerAccess/</span></div>
<div class="ln" style="top:397.56px"><span class="k">public class</span><span class="t"> LuaLoader </span><span class="k">implements</span><span class="t"> </span><span class="rn">JavaFunction</span><span class="t">, </span><span class="rn">CoronaRuntimeListener</span><span class="t"> {</span></div>
<div class="ln" style="top:408.45px"><span class="t">    </span><span class="c">/<span class="ast">*</span><span class="ast">*</span> Lua registry ID to the Lua function to be called when the ad request finishes. <span class="ast">*</span>/</span></div>
<div class="ln" style="top:419.34px"><span class="t">    </span><span class="k">private int</span><span class="t"> </span><span class="f">fListener</span><span class="t">;</span></div>
<div class="ln" style="top:430.23px"></div>
<div class="ln" style="top:441.11px"><span class="t">    </span><span class="c">/<span class="ast">*</span><span class="ast">*</span> This corresponds to the event name, e.g. [Lua] event.name <span class="ast">*</span>/</span></div>
<div class="ln" style="top:452.00px"><span class="t">    </span><span class="k">private static final</span><span class="t"> String </span><span class="ci">EVENT_NAME</span><span class="t"> = </span><span class="s">"pluginlibraryevent"</span><span class="t">;</span></div>
<div class="ln" style="top:462.89px"></div>
<div class="ln" style="top:473.78px"></div>
<div class="ln" style="top:484.67px"><span class="t">    </span><span class="c">/<span class="ast">*</span><span class="ast">*</span></span></div>
<div class="ln" style="top:495.56px"><span class="t">    </span><span class="c"> <span class="ast">*</span> Creates a new Lua interface to this plugin.</span></div>
<div class="ln" style="top:506.45px"><span class="t">    </span><span class="c"> <span class="ast">*</span> </span><span class="tag">&lt;p&gt;</span></div>
<div class="ln" style="top:517.34px"><span class="t">    </span><span class="c"> <span class="ast">*</span> Note that a new LuaLoader instance will not be created for every CoronaActivity instance.</span></div>
<div class="ln" style="top:528.23px"><span class="t">    </span><span class="c"> <span class="ast">*</span> That is, only one instance of this class will be created for the lifetime of the application process.</span></div>
<div class="ln" style="top:539.12px"><span class="t">    </span><span class="c"> <span class="ast">*</span> This gives a plugin the option to do operations in the background while the CoronaActivity is destroyed.</span></div>
<div class="ln" style="top:550.00px"><span class="t">    </span><span class="c"> <span class="ast">*</span>/</span></div></div>
  <div class="abs" style="left:740.4px;top:15px;width:4.4px;height:82px;background:#d6d6d6;border-radius:2.2px"></div>
  <div class="abs" style="left:0;top:-57px"><div class="mk" style="top:95.9px;height:15.8px"></div><div class="mk" style="top:127.2px;height:2.2px"></div><div class="mk" style="top:160.8px;height:2.4px"></div><div class="mk" style="top:168.2px;height:2.2px"></div><div class="mk" style="top:196.7px;height:3.8px"></div><div class="mk" style="top:203px;height:4.4px"></div><div class="mk" style="top:209.9px;height:3.8px"></div><div class="mk" style="top:235.8px;height:4px"></div><div class="mk" style="top:264.2px;height:3.4px"></div><div class="mk" style="top:287px;height:3.2px"></div><div class="mk" style="top:306.1px;height:3px"></div><div class="mk" style="top:331.9px;height:2.9px"></div><div class="mk" style="top:337.2px;height:3.8px"></div><div class="mk" style="top:359.6px;height:2px"></div><div class="mk" style="top:365.6px;height:3.8px"></div><div class="mk" style="top:393.6px;height:2px"></div><div class="mk" style="top:399.3px;height:2px"></div><div class="mk" style="top:410.3px;height:2px"></div><div class="mk" style="top:423.2px;height:2px"></div><div class="mk" style="top:429.1px;height:2px"></div><div class="mk" style="top:440.3px;height:2px"></div><div class="mk" style="top:453.1px;height:2.2px"></div><div class="mk" style="top:470.5px;height:2px"></div><div class="mk" style="top:480.1px;height:2.2px"></div><div class="mk" style="top:500.7px;height:3.7px"></div><div class="mk" style="top:511.4px;height:1.9px"></div><div class="mk" style="top:520.8px;height:2px"></div><div class="mk" style="top:541.8px;height:3.6px"></div></div>
  <svg class="abs" style="left:737px;top:1px" width="10" height="10" viewBox="0 0 10 10"><circle cx="5" cy="5" r="4.2" fill="#e86a60"/><rect x="4.3" y="2.3" width="1.4" height="3.4" fill="#fff"/><rect x="4.3" y="6.6" width="1.4" height="1.3" fill="#fff"/></svg>
</div>

<div id="status"></div>
<svg class="ic" style="left:20.3px;top:564.3px" width="10" height="9.5" viewBox="0 0 10 9.5"><rect x="0" y="0" width="9.7" height="9.3" fill="#787878"/><rect x="1.3" y="2.3" width="7.1" height="5.6" fill="#c8c8c8"/><path d="M2.3 3.5l1.6 1.2-1.6 1.2M4.6 6.3h2.6" stroke="#555" stroke-width="0.8" fill="none"/></svg>
<svg class="ic" style="left:82.5px;top:562.5px" width="11" height="11" viewBox="0 0 11 11"><g transform="scale(0.85)" fill="#8cc03c"><path d="M2.5 4.2a3.5 3.2 0 0 1 7 0z"/><rect x="2.5" y="4.8" width="7" height="5" rx="0.6"/><rect x="0.6" y="4.8" width="1.4" height="3.8" rx="0.7"/><rect x="10" y="4.8" width="1.4" height="3.8" rx="0.7"/><rect x="3.8" y="9" width="1.4" height="2.6" rx="0.7"/><rect x="6.8" y="9" width="1.4" height="2.6" rx="0.7"/></g></svg>
<svg class="ic" style="left:184.5px;top:564px" width="9" height="9" viewBox="0 0 9 9"><rect x="0.5" y="0.5" width="8" height="8" fill="#eac48a"/><rect x="1.5" y="1.5" width="6" height="6" fill="#f0d2a4"/></svg>
<svg class="ic" style="left:261px;top:564.5px" width="7" height="10" viewBox="0 0 7 10"><path d="M1 3.2a2.5 2.5 0 0 1 5 0z" fill="#6a6a6a"/><rect x="0.5" y="3.6" width="6" height="2.6" fill="#f0a050"/><rect x="0.5" y="6.4" width="6" height="2.8" fill="#40a8b8"/></svg>
<svg class="ic" style="left:864.5px;top:563px" width="10" height="10" viewBox="0 0 10 10"><path d="M0.5 0.5h9v6H4l-2.5 3v-3H0.5z" fill="#b4b4b4"/></svg>
<svg class="ic" style="left:932.5px;top:563.5px" width="9" height="10" viewBox="0 0 9 10"><rect x="0.5" y="0.5" width="8.5" height="9" fill="#a8d0ec" stroke="#7aa8cc" stroke-width="0.8"/><path d="M2.5 3.5h4M2.5 5.5h3" stroke="#4a80b0" stroke-width="0.8"/></svg>
<div id="statustext">
  <div class="st" style="left:33.4px;letter-spacing:-0.15px">Terminal</div>
  <div class="st" style="left:95.5px;letter-spacing:-0.07px"><u>6</u>: Android Monitor</div>
  <div class="st" style="left:197px;letter-spacing:-0.52px"><u>0</u>: Messages</div>
  <div class="st" style="left:270.2px;letter-spacing:-0.75px">TODO</div>
  <div class="st" style="left:878.3px;letter-spacing:-0.39px">Event Log</div>
  <div class="st" style="left:944.6px;letter-spacing:-0.31px">Gradle Console</div>
</div>
</div>

<div class="abs" style="left:16px;top:38px;width:57px;height:16.5px;background:#9b9b9b;border:1px solid #8e8e8e"></div>
<svg class="ic" style="left:23.5px;top:40px" width="11" height="11" viewBox="0 0 11 11"><g transform="scale(0.9)" fill="#8cc03c"><path d="M2.5 4.2a3.5 3.2 0 0 1 7 0z"/><rect x="2.5" y="4.8" width="7" height="5" rx="0.6"/><rect x="0.6" y="4.8" width="1.4" height="3.8" rx="0.7"/><rect x="10" y="4.8" width="1.4" height="3.8" rx="0.7"/><rect x="3.8" y="9" width="1.4" height="2.6" rx="0.7"/><rect x="6.8" y="9" width="1.4" height="2.6" rx="0.7"/></g></svg>
<div class="abs" style="left:37px;top:38px;height:17px;line-height:17px;font-size:8.7px;color:#fafafa;white-space:nowrap">Android</div>
<div class="abs" style="left:73px;top:38px;width:71px;height:16.5px;background:linear-gradient(#e4e4e4,#dadada);border-right:1px solid #c4c4c4"></div>
<svg class="ic" style="left:80px;top:41px" width="11" height="11" viewBox="0 0 11 11"><circle cx="5.5" cy="5.5" r="4.8" fill="#b8cfe0"/><path d="M1.5 6.5c2-0.5 3-2.5 3.5-5M5 9.8c0.5-2 2.5-3 5-3" stroke="#9aa8b4" stroke-width="1.2" fill="none"/></svg>
<div class="abs" style="left:94px;top:38px;height:17px;line-height:17px;font-size:8.25px;color:#8a8a8a;white-space:nowrap">Project Files</div>
<svg class="ic" style="left:149.5px;top:43px" width="9" height="7" viewBox="0 0 9 7"><path d="M3.5 0.5v6L0.5 3.5z M5.5 0.5v6l3-3z" fill="#a4a4a4"/></svg>
<svg class="ic" style="left:192.5px;top:42px" width="9" height="9" viewBox="0 0 9 9"><circle cx="4.5" cy="4.5" r="3.9" fill="#eeeeee" stroke="#9a9a9a" stroke-width="1.2"/><path d="M2.8 2.8l3.4 3.4M6.2 2.8L2.8 6.2" stroke="#9a9a9a" stroke-width="1.2"/></svg>
<svg class="ic" style="left:207.5px;top:42px" width="9" height="9" viewBox="0 0 9 9"><path d="M4.5 0v9M0.5 4.5h8" stroke="#a8a8a8" stroke-width="1"/><path d="M2.5 2l2 1.8 2-1.8M2.5 7l2-1.8 2 1.8" fill="none" stroke="#a8a8a8" stroke-width="1"/></svg>
<div class="abs" style="left:223px;top:41px;width:1px;height:11px;background:#d0d0d0"></div>
<svg class="ic" style="left:228.5px;top:42px" width="10" height="10" viewBox="0 0 10 10"><circle cx="4.8" cy="4.8" r="3" fill="none" stroke="#8a8a8a" stroke-width="2.2" stroke-dasharray="1.6 0.8"/><circle cx="4.8" cy="4.8" r="2.4" fill="#8a8a8a"/><circle cx="4.8" cy="4.8" r="1" fill="#dcdcdc"/></svg>
<svg class="ic" style="left:239px;top:45px" width="4" height="3" viewBox="0 0 4 3"><path d="M0 0h4L2 2.5z" fill="#8a8a8a"/></svg>
<svg class="ic" style="left:248px;top:41px" width="10" height="11" viewBox="0 0 10 11"><rect x="0.8" y="0.5" width="1.6" height="10" fill="#8a8a8a"/><path d="M3.5 4.5h5" stroke="#a0a0a0" stroke-width="1"/><path d="M3.5 4.5l2-1.8v3.6z" fill="#a0a0a0"/></svg>
</body></html>
